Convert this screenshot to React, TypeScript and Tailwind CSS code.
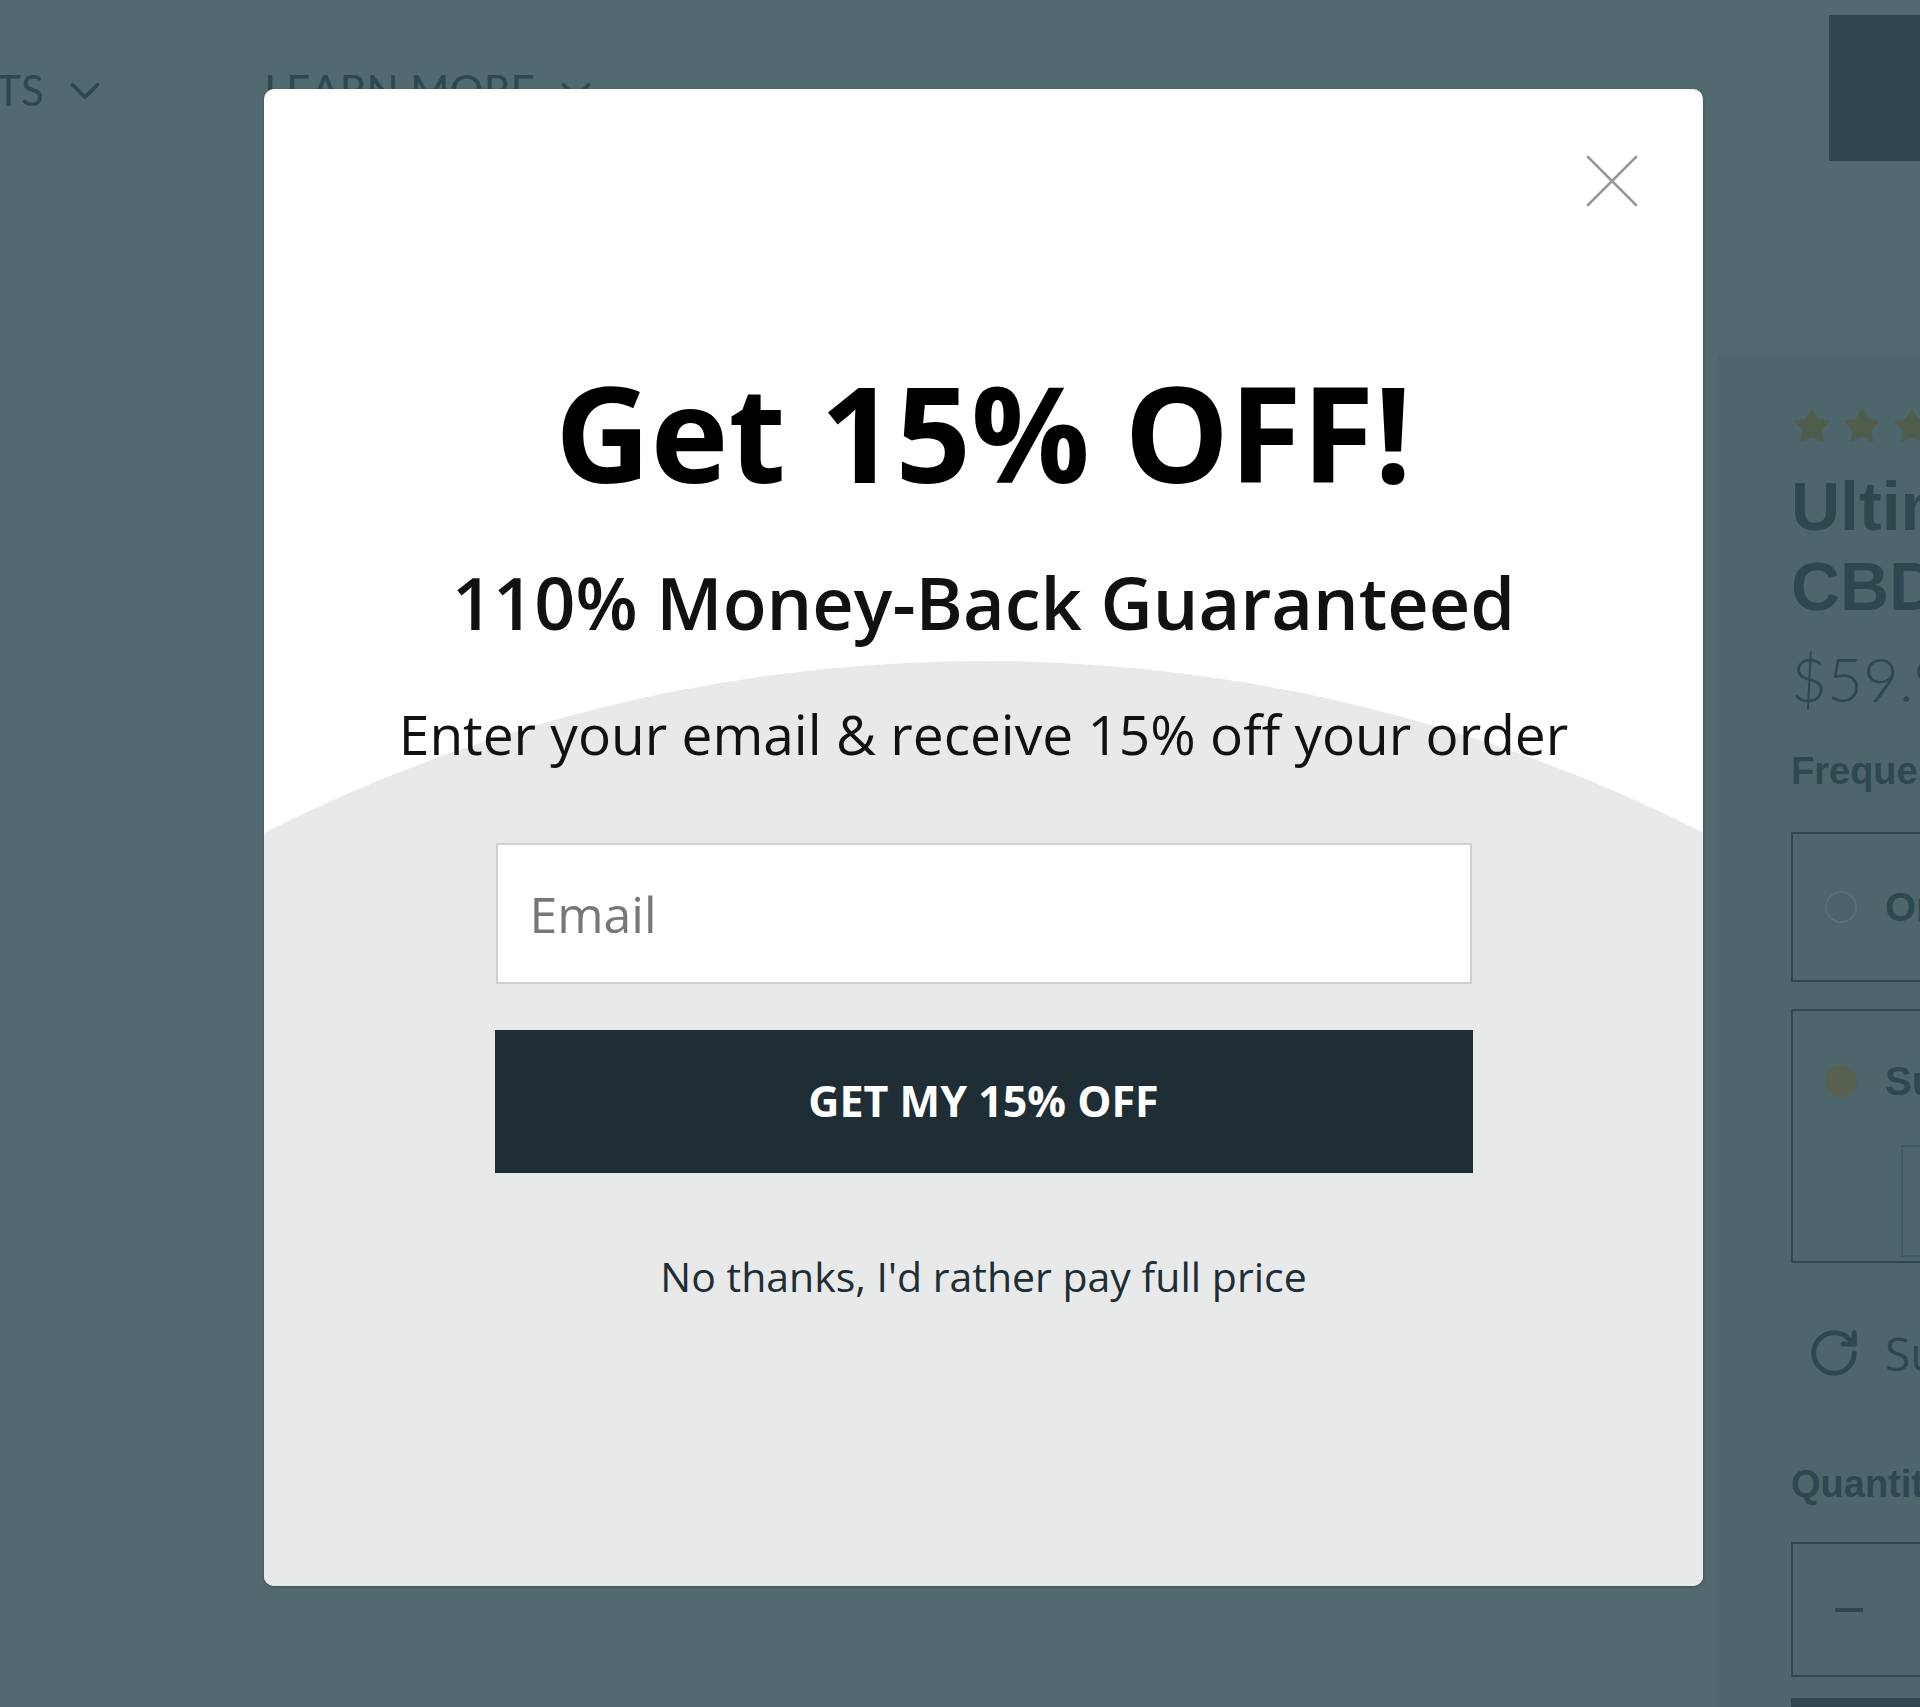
import React from "react";
import { ChevronDown, RotateCw, Star } from "lucide-react";

const ink = "text-[#2d4850]";

/** Top nav strip, mostly hidden behind the popup */
const NavBar = () => (
  <div className="flex h-[355px] items-start justify-between">
    <nav className={`flex items-center pt-[59px] font-['Lato',sans-serif] text-[42px] font-normal tracking-[0.01em] ${ink}`}>
      <span className="flex items-center gap-[16px] -ml-[4px]">
        TS
        <ChevronDown size={50} strokeWidth={1.8} />
      </span>
      <span className="ml-[154px] flex items-center gap-[16px]">
        LEARN MORE
        <ChevronDown size={50} strokeWidth={1.8} />
      </span>
    </nav>
    <div className="mt-[15px] h-[146px] w-[91px] bg-[#2f4850]" />
  </div>
);

/** Product column on the right edge of the page */
const ProductPanel = () => (
  <div className="h-full w-[202px] overflow-hidden bg-[#4d666b] pl-[73px] font-['Liberation_Sans',Arial,sans-serif]">
    <div className="w-[600px]">
      <div className="mt-[50px] flex gap-[8px] text-[#4f5d4d]">
        {[0, 1, 2, 3, 4].map((i) => (
          <Star key={i} size={42} fill="currentColor" strokeWidth={0} />
        ))}
      </div>
      <h1 className={`mt-[19px] text-[68px] font-bold leading-[80px] ${ink}`}>
        Ultimate
        <br />
        CBD Oil
      </h1>
      <div className={`mt-[21px] font-['Lato',sans-serif] text-[62px] font-light leading-none ${ink}`}>$59.99</div>
      <div className={`mt-[43px] text-[38px] font-bold leading-none ${ink}`}>Frequency</div>

      <div className="mt-[42px] flex h-[150px] w-[500px] items-center border-2 border-[#2f4850] pl-[32px]">
        <span className="h-[32px] w-[32px] rounded-full border-2 border-[#56707a] bg-[#4a6268]" />
        <span className={`ml-[28px] text-[40px] font-bold ${ink}`}>One-time</span>
      </div>

      <div className="mt-[27px] h-[254px] w-[500px] border-2 border-[#2f4850] pl-[32px]">
        <div className="mt-[40px] flex items-center">
          <span className="h-[32px] w-[32px] rounded-full bg-[#58604f]" />
          <span className={`ml-[28px] text-[40px] font-bold ${ink}`}>Subscribe</span>
        </div>
        <div className="ml-[76px] mt-[34px] h-[112px] w-[300px] border-2 border-[#3f5a62]" />
      </div>

      <div className={`mt-[65px] flex h-[50px] items-center font-['Open_Sans',sans-serif] text-[46px] ${ink}`}>
        <RotateCw size={54} strokeWidth={2.2} className="ml-[16px]" />
        <span className="ml-[24px]">Subscribe</span>
      </div>

      <div className={`mt-[87px] text-[38px] font-bold leading-none ${ink}`}>Quantity</div>

      <div className="mt-[39px] flex h-[135px] w-[500px] items-center border-2 border-[#2f4850] pl-[42px]">
        <span className="h-[4px] w-[28px] bg-[#2f4850]" />
      </div>
      <div className="mt-[21px] h-[40px] w-[500px] bg-[#2f4850]" />
    </div>
  </div>
);

/** Discount popup */
const DiscountModal = () => (
  <div className="absolute left-[264px] top-[89px] h-[1497px] w-[1439px] overflow-hidden rounded-[10px] bg-white font-['Open_Sans',sans-serif] shadow-[0_1px_3px_rgba(0,0,0,0.25)]">
    {/* soft grey dome behind the form */}
    <div className="absolute left-[-873px] top-[572px] h-[3186px] w-[3186px] rounded-full bg-[#e8eae9]" />

    <button type="button" className="absolute left-[1322px] top-[66px]">
      <svg width="52" height="52" viewBox="0 0 52 52" fill="none" stroke="#9a9a9a" strokeWidth="2.6" strokeLinecap="round">
        <path d="M2 2L50 50M50 2L2 50" />
      </svg>
    </button>

    <div className="relative flex flex-col items-center pt-[277px]">
      <h2 className="text-[132px] font-bold leading-none text-black">Get 15% OFF!</h2>
      <p className="mt-[68px] text-[72px] font-semibold leading-none text-[#111]">
        110% Money-Back Guaranteed
      </p>
      <p className="mt-[68px] text-[55px] font-medium leading-none text-[#111]">
        Enter your email &amp; receive 15% off your order
      </p>
      <input
        type="email"
        placeholder="Email"
        className="mt-[82px] h-[141px] w-[976px] border-2 border-[#cfcfcf] bg-white px-[32px] text-[50px] text-[#333] outline-none placeholder:text-[#777]"
      />
      <button
        type="button"
        className="mt-[46px] h-[143px] w-[978px] bg-[#1f2d35] text-[43px] font-bold text-white"
      >
        GET MY 15% OFF
      </button>
      <button type="button" className="mt-[83px] text-[41px] leading-none text-[#1f2d35]">
        No thanks, I'd rather pay full price
      </button>
    </div>
  </div>
);

export default function App() {
  return (
    <div className="relative h-[1707px] w-[1920px] overflow-hidden bg-[#516a6f]">
      <NavBar />
      <div className="flex h-[1352px]">
        <div className="flex-1" />
        <ProductPanel />
      </div>
      <DiscountModal />
    </div>
  );
}
